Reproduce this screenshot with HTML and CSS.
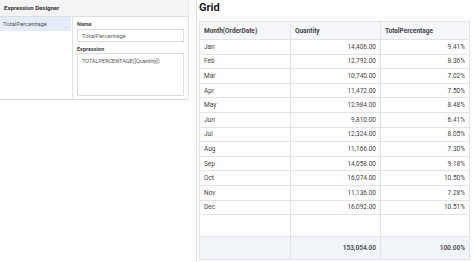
FILE: index.html
```html
<!DOCTYPE html>
<html lang="en">
<head>
    <meta charset="UTF-8">
    <title>Expression Designer</title>
    <link rel="stylesheet" href="styles.css">
</head>
<body>
    <div class="left-pane">
        <div class="designer">
            <div class="designer-header">Expression Designer</div>
            <div class="designer-body">
                <ul class="expr-list">
                    <li class="expr-item selected">TotalPercentage</li>
                </ul>
                <div class="expr-form">
                    <label class="field-label">Name</label>
                    <div class="field-input">TotalPercentage</div>
                    <label class="field-label">Expression</label>
                    <div class="field-area">TOTALPERCENTAGE([Quantity])</div>
                </div>
            </div>
        </div>
    </div>

    <div class="grid-pane">
        <h2 class="grid-title">Grid</h2>
        <table class="grid">
            <thead>
                <tr>
                    <th class="col-month">Month(OrderDate)</th>
                    <th class="col-qty">Quantity</th>
                    <th class="col-pct">TotalPercentage</th>
                </tr>
            </thead>
            <tbody>
                <tr><td>Jan</td><td class="num">14,406.00</td><td class="num">9.41%</td></tr>
                <tr><td>Feb</td><td class="num">12,792.00</td><td class="num">8.36%</td></tr>
                <tr><td>Mar</td><td class="num">10,740.00</td><td class="num">7.02%</td></tr>
                <tr><td>Apr</td><td class="num">11,472.00</td><td class="num">7.50%</td></tr>
                <tr><td>May</td><td class="num">12,984.00</td><td class="num">8.48%</td></tr>
                <tr><td>Jun</td><td class="num">9,810.00</td><td class="num">6.41%</td></tr>
                <tr><td>Jul</td><td class="num">12,324.00</td><td class="num">8.05%</td></tr>
                <tr><td>Aug</td><td class="num">11,166.00</td><td class="num">7.30%</td></tr>
                <tr><td>Sep</td><td class="num">14,058.00</td><td class="num">9.18%</td></tr>
                <tr><td>Oct</td><td class="num">16,074.00</td><td class="num">10.50%</td></tr>
                <tr><td>Nov</td><td class="num">11,136.00</td><td class="num">7.28%</td></tr>
                <tr><td>Dec</td><td class="num">16,092.00</td><td class="num">10.51%</td></tr>
                <tr class="spacer-row"><td></td><td></td><td></td></tr>
            </tbody>
            <tfoot>
                <tr><td></td><td class="num">153,054.00</td><td class="num">100.00%</td></tr>
            </tfoot>
        </table>
    </div>
</body>
</html>
```

FILE: styles.css
```css
/* Global Styles */
* {
    margin: 0;
    padding: 0;
    box-sizing: border-box;
}

body {
    font-family: 'Roboto', 'Liberation Sans', sans-serif;
    font-size: 7px;
    color: #333;
    background: #fff;
    display: flex;
    width: 474px;
    height: 262px;
    overflow: hidden;
}

/* Left pane with the designer */
.left-pane {
    width: 197px;
    flex-shrink: 0;
    border-right: 1px solid #e2e2e2;
}

.designer {
    width: 189px;
    height: 100px;
    border-right: 1px solid #e4e4e4;
    border-bottom: 1px solid #dcdcdc;
    display: flex;
    flex-direction: column;
}

.designer-header {
    height: 17px;
    line-height: 16px;
    padding-left: 4px;
    font-size: 6px;
    font-weight: bold;
    color: #333;
    background: #f4f4f4;
    border-bottom: 1px solid #dedede;
}

.designer-body {
    flex-grow: 1;
    display: flex;
}

.expr-list {
    list-style: none;
    width: 73px;
    border-right: 1px solid #e2e2e2;
}

.expr-item {
    height: 14px;
    line-height: 14px;
    padding-left: 3px;
    font-size: 6px;
    color: #555;
}

.expr-item.selected {
    background: #e3ecf8;
    margin-right: 1px;
}

.expr-form {
    flex-grow: 1;
    padding: 4px 4px 0 4px;
    display: flex;
    flex-direction: column;
}

.field-label {
    font-size: 5.5px;
    font-weight: bold;
    color: #444;
    height: 7px;
    line-height: 7px;
    margin-bottom: 0.5px;
}

.field-input {
    height: 13px;
    line-height: 12px;
    border: 1px solid #dcdcdc;
    padding-left: 4px;
    font-size: 6px;
    color: #666;
    margin-bottom: 4px;
}

.field-area {
    height: 43px;
    border: 1px solid #dcdcdc;
    padding: 4px 4px;
    font-size: 5.5px;
    color: #555;
}

/* Grid */
.grid-pane {
    flex-grow: 1;
    padding: 2px 4px 0 2px;
}

.grid-title {
    font-size: 11px;
    font-weight: bold;
    color: #222;
    height: 19px;
    line-height: 12px;
}

.grid {
    width: 271px;
    border-collapse: collapse;
    border: 1px solid #e0e0e0;
    font-size: 6.5px;
}

.grid th,
.grid td {
    border: 1px solid #e3e3e3;
    padding: 0 4px;
    white-space: nowrap;
}

.grid th {
    height: 18px;
    text-align: left;
    font-weight: bold;
    color: #444;
    background: #f5f7fa;
}

.grid tbody td {
    height: 14.6px;
    color: #444;
}

.col-month {
    width: 91px;
}

.col-qty {
    width: 90px;
}

.grid td.num {
    text-align: right;
}

.grid tbody tr.spacer-row td {
    height: 22px;
}

.grid tfoot td {
    height: 23px;
    background: #f1f5fa;
    font-weight: bold;
    color: #555;
}
```
